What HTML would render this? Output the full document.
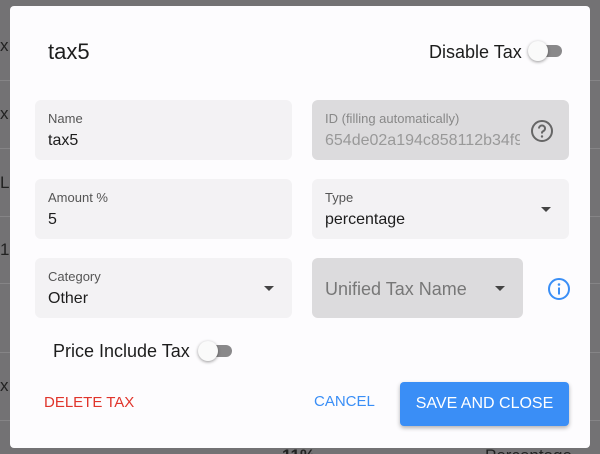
<!DOCTYPE html>
<html style="width:600px;height:454px;overflow:hidden"><head><style>
body{margin:0;width:600px;height:454px;overflow:hidden;background:#737274;font-family:"Liberation Sans",sans-serif;position:relative}
.bg{position:absolute;color:#222;font-size:17px;line-height:20px}
.line{position:absolute;left:0;width:600px;height:1px;background:#858486}
.dlg{position:absolute;left:10px;top:6px;width:580px;height:442px;background:#fdfcfe;border-radius:4px}
.f{position:absolute;border-radius:6px;background:#f3f2f4}
.f .l{position:absolute;left:13px;top:11px;font-size:13px;color:#555}
.f .v{position:absolute;left:13px;top:32px;font-size:16px;color:#1d1d1d}
.g{background:#dcdbdd}
.arr{position:absolute;width:0;height:0;border-left:5px solid transparent;border-right:5px solid transparent;border-top:5px solid #444}
.tog{position:absolute;width:30px;height:12px;border-radius:6px;background:#8a898b}
.tog::before{content:"";position:absolute;left:-4px;top:-4px;width:20px;height:20px;border-radius:50%;background:#fafafa;box-shadow:0 1px 3px rgba(0,0,0,.4)}
.t{position:absolute;white-space:nowrap}
</style></head><body>
<div class="line" style="top:80px"></div><div class="line" style="top:148px"></div><div class="line" style="top:216px"></div><div class="line" style="top:283px"></div><div class="line" style="top:352px"></div><div class="line" style="top:420px"></div>
<div class="bg" style="left:0;top:36px">x</div><div class="bg" style="left:0;top:104px">x</div><div class="bg" style="left:0;top:173px">L</div><div class="bg" style="left:0;top:240px">1</div><div class="bg" style="left:0;top:376px">x</div>
<div class="dlg">
<div class="t" style="left:38px;top:33px;font-size:22px;color:#1d1d1d">tax5</div>
<div class="t" style="left:419px;top:36px;font-size:18px;color:#1d1d1d">Disable Tax</div>
<div class="tog" style="left:522px;top:39px"></div>
<div class="f" style="left:25px;top:94px;width:257px;height:60px"><div class="l">Name</div><div class="v">tax5</div></div>
<div class="f g" style="left:302px;top:94px;width:257px;height:60px;overflow:hidden"><div class="l" style="color:#888">ID (filling automatically)</div><div class="v" style="color:#999;width:195px;overflow:hidden">654de02a194c858112b34f9</div>
<svg style="position:absolute;left:218px;top:19px" width="24" height="24" viewBox="0 0 24 24"><circle cx="12" cy="12" r="10" fill="none" stroke="#666" stroke-width="2"/><path d="M9 9.5a3 3 0 1 1 4 2.8c-.8.4-1 1-1 1.7v.5" fill="none" stroke="#666" stroke-width="2"/><circle cx="12" cy="17.5" r="1.2" fill="#666"/></svg></div>
<div class="f" style="left:25px;top:173px;width:257px;height:60px"><div class="l">Amount %</div><div class="v">5</div></div>
<div class="f" style="left:302px;top:173px;width:257px;height:60px"><div class="l">Type</div><div class="v">percentage</div><div class="arr" style="left:229px;top:28px"></div></div>
<div class="f" style="left:25px;top:252px;width:257px;height:60px"><div class="l">Category</div><div class="v">Other</div><div class="arr" style="left:229px;top:28px"></div></div>
<div class="f g" style="left:302px;top:252px;width:211px;height:60px"><div class="v" style="top:21px;font-size:18px;color:#777">Unified Tax Name</div><div class="arr" style="left:183px;top:28px"></div></div>
<svg style="position:absolute;left:537px;top:271px" width="24" height="24" viewBox="0 0 24 24"><circle cx="12" cy="12" r="10" fill="none" stroke="#3a8ef6" stroke-width="2"/><rect x="11" y="10.5" width="2" height="7" fill="#3a8ef6"/><circle cx="12" cy="7.5" r="1.3" fill="#3a8ef6"/></svg>
<div class="t" style="left:43px;top:335px;font-size:18px;color:#1d1d1d">Price Include Tax</div>
<div class="tog" style="left:192px;top:339px"></div>
<div class="t" style="left:34px;top:388px;font-size:15px;color:#e0342b">DELETE TAX</div>
<div class="t" style="left:304px;top:387px;font-size:15px;color:#3a8ef6">CANCEL</div>
<div style="position:absolute;left:390px;top:376px;width:169px;height:44px;background:#3a8ef6;border-radius:4px;box-shadow:0 2px 4px rgba(0,0,0,.3);color:#fff;font-size:16px;text-align:center;line-height:44px">SAVE AND CLOSE</div>
</div>
<div class="bg" style="left:282px;top:446px;font-weight:bold">11%</div><div class="bg" style="left:485px;top:446px">Percentage</div>
</body></html>
